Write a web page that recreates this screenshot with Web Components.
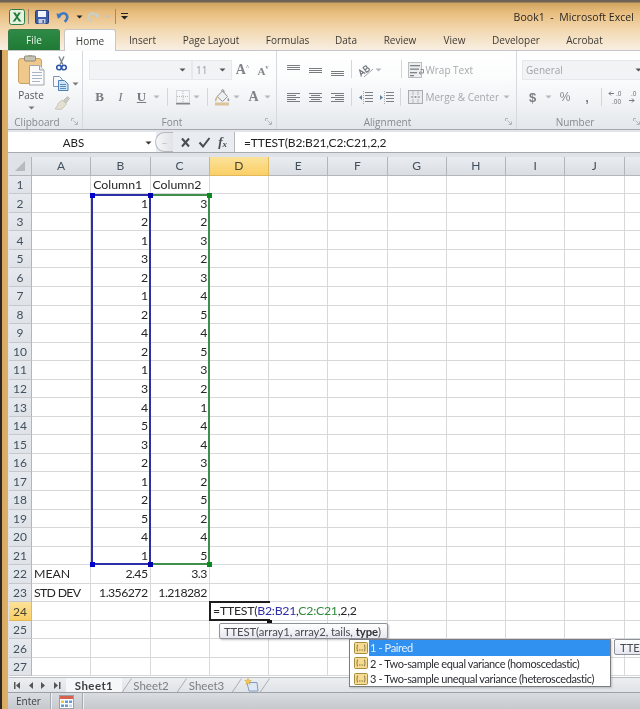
<!DOCTYPE html>
<html><head><meta charset="utf-8">
<style>
html,body{margin:0;padding:0;background:#d9ab62;overflow:hidden}
body{width:640px;height:709px}
</style></head><body>
<xl-app></xl-app>
<script>
const UI='"Open Sans","Noto Sans",sans-serif', CELL='Lato,"Liberation Sans",sans-serif';
const svg=(w,h,b)=>`<svg width="${w}" height="${h}" viewBox="0 0 ${w} ${h}" xmlns="http://www.w3.org/2000/svg">${b}</svg>`;
const ARW=(c='#8d9196')=>svg(7,4,`<path d="M0.5 0.5h6l-3 3z" fill="${c}"/>`);
const ICON={
 excel:svg(16,16,`<rect x=".5" y=".5" width="15" height="15" rx="2" fill="#e6f2dc" stroke="#2f7d4a"/><path d="M4 3.5l3 4.5-3.4 4.6h2.4l2-3 1.9 3h2.6L8.9 8l3-4.5H9.5L8 6.1 6.5 3.5z" fill="#1f7a3d"/>`),
 save:svg(14,14,`<rect x=".5" y=".5" width="13" height="13" rx="1" fill="#3b5ea8" stroke="#2a3f7c"/><rect x="3" y="1" width="8" height="6" fill="#f2f5fb"/><rect x="3.5" y="9" width="7" height="4.5" fill="#c7cfe0"/><rect x="7.5" y="10" width="1.5" height="3" fill="#3b5ea8"/>`),
 undo:svg(13,13,`<path d="M3 7.5C3.5 3.6 8 2 10.2 4.4c2.2 2.4.6 5.6-1.6 7.4" fill="none" stroke="#3f79c4" stroke-width="2.6"/><path d="M.4 3.4l6 .6-4.4 5z" fill="#3f79c4"/>`),
 redo:svg(13,13,`<path d="M10 7.5C9.5 3.6 5 2 2.8 4.4c-2.2 2.4-.6 5.6 1.6 7.4" fill="none" stroke="#c9cfc6" stroke-width="2.4"/><path d="M12.6 3.4l-6 .6 4.4 5z" fill="#c9cfc6"/>`),
 qat:svg(7,7,`<rect x="0" y="0" width="7" height="1" fill="#222"/><path d="M0 3h7l-3.5 3.6z" fill="#222"/>`),
 paste:svg(27,31,`<rect x=".5" y="3.5" width="23" height="25" rx="2.5" fill="#eec98b" stroke="#c99f62"/><rect x="6.5" y="1" width="11" height="5" rx="1" fill="#c9c3b4" stroke="#8f8a7c"/><rect x="10" y="0" width="4" height="2" fill="#a9a496"/><path d="M11.500 10.500h10l4.500 4.500v15h-14.500z" fill="#fbfbfb" stroke="#9fa6ad"/><path d="M21.500 10.500v4.500h4.500" fill="#e8ebee" stroke="#9fa6ad"/><g fill="#a6b6c6"><rect x="14" y="17" width="10" height="1"/><rect x="14" y="20" width="10" height="1"/><rect x="14" y="23" width="10" height="1"/><rect x="14" y="26" width="8" height="1"/></g>`),
 cut:svg(11,15,`<path d="M3 .5l3.800 8M8 .5L4.200 8.500" stroke="#7f8488" stroke-width="1.400" fill="none"/><circle cx="3" cy="11.500" r="2.300" fill="none" stroke="#2e55a8" stroke-width="1.600"/><circle cx="8" cy="11.500" r="2.300" fill="none" stroke="#2e55a8" stroke-width="1.600"/>`),
 copy:svg(16,15,`<path d="M.5.5h6l2.500 2.500v7.500H.5z" fill="#f6f8fb" stroke="#7f97b5"/><path d="M5.500 4.500h6l3.500 3.500v6.500H5.500z" fill="#cfe3f6" stroke="#4b7fb6"/><g fill="#5a8cc0"><rect x="7" y="8" width="6" height="1"/><rect x="7" y="10" width="6" height="1"/><rect x="7" y="12" width="6" height="1"/></g>`),
 brush:svg(16,14,`<path d="M9.500 4.500L13.500.500l2 2-3.500 4.500z" fill="#c9c9c5" stroke="#a7a7a2" stroke-width=".6"/><path d="M8.500 4L12.500 8 8 13c-2.500.8-5.500.4-7-.2 1.500-1 2.800-3.800 3.300-5.800z" fill="#e3dfd2" stroke="#bdb9a9" stroke-width=".7"/>`),
 borders:svg(16,15,`<rect x="1.500" y=".5" width="13" height="12" fill="none" stroke="#b5b9bd" stroke-dasharray="1 1"/><path d="M8 1v12M2 6.500h12" stroke="#b5b9bd" stroke-dasharray="1 1"/><rect x="1" y="13" width="14" height="1.500" fill="#83878b"/>`),
 fill:svg(17,17,`<path d="M3 7.500L8.500 2l5 5.500L8.500 12.500z" fill="#efefef" stroke="#8f9296"/><path d="M8 2.500c-1-3 2.500-2.500 2 1" fill="none" stroke="#7f8387"/><path d="M3 7.500c-1.500 1-2.500 3-2 4.500s2-.5 2-2z" fill="#d5b98b"/><path d="M14 8.500c.8 1.400 1.600 2.300 1.200 3.200-.5.800-1.800.4-1.800-.6z" fill="#8f9296"/><rect x="1" y="13.500" width="14" height="3" fill="#dbc49b"/>`),
 orient:svg(17,15,`<g transform="rotate(-38 8 8)"><path d="M1 9.500l2.500-6 2.500 6M2 7.500h3" fill="none" stroke="#6f7478" stroke-width="1.100"/><path d="M7.800 9.500V3.500h2a1.500 1.500 0 010 3h-2h2.500a1.500 1.500 0 010 3z" fill="none" stroke="#6f7478" stroke-width="1.100"/></g><path d="M6 14L15 6" stroke="#9ea3a8" stroke-width="1"/>`),
 wrap:svg(16,16,`<rect x=".5" y=".5" width="13" height="15" fill="#eceef0" stroke="#babec2"/><g fill="#7e8387"><rect x="2" y="3" width="10" height="1.300"/><rect x="2" y="6.500" width="9" height="1.300"/><rect x="2" y="10" width="7" height="1.300"/><rect x="2" y="13" width="4" height="1.300"/></g><path d="M12.500 7.500h3v3.500h-4M13 9.500l-2 1.500 2 1.500" fill="none" stroke="#8a8f93"/>`),
 merge:svg(15,14,`<rect x=".5" y=".5" width="14" height="13" fill="#e9eaeb" stroke="#a8acb0"/><path d="M5 1v12M10 1v12" stroke="#b6babe"/><rect x="3" y="5.500" width="9" height="3" fill="#fbfbfb"/><path d="M3 7h2.500M12 7H9.500" stroke="#72777b"/><rect x="6.500" y="6" width="2" height="2" fill="#9a9ea2"/>`),
 launcher:svg(7,7,`<path d="M.5 3V.5H3" fill="none" stroke="#b3b7bb"/><path d="M2.500 2.500l3.500 3.500M3.500 6.500h3v-3" fill="none" stroke="#b3b7bb"/>`),
 dec1:svg(18,16,`<path d="M1 4.500h5M3 2.500l-2 2 2 2" fill="none" stroke="#75797d"/><text x="8" y="6.500" font-size="6.500" font-family="Liberation Sans" fill="#6e7276">.0</text><text x="4" y="14.500" font-size="6.500" font-family="Liberation Sans" fill="#6e7276">.00</text>`),
 dec2:svg(12,16,`<path d="M1 11.500h5M4 9.500l2 2-2 2" fill="none" stroke="#75797d"/><text x="3" y="6.500" font-size="6.500" font-family="Liberation Sans" fill="#6e7276">.0</text>`),
 newsheet:svg(16,15,`<path d="M4 4.500h10l1 8.500H6z" fill="#dfe9f5" stroke="#7f9cc0"/><path d="M5 0l1 2.300 2.400.2-1.900 1.600.6 2.400L5 5.200 2.900 6.500l.6-2.400L1.600 2.500 4 2.300z" fill="#f3c64f" stroke="#d69b2d" stroke-width=".4"/>`),
 macro:svg(15,15,`<rect x=".5" y="1.500" width="14" height="13" fill="#fff" stroke="#9aa0a8"/><rect x="1" y="2" width="13" height="3" fill="#d8604e"/><rect x="2" y="6.500" width="3" height="2.500" fill="#f0c34d"/><rect x="6" y="6.500" width="3" height="2.500" fill="#5e9bd8"/><rect x="10" y="6.500" width="3" height="2.500" fill="#5e9bd8"/><rect x="2" y="10.500" width="3" height="2.500" fill="#5e9bd8"/><rect x="6" y="10.500" width="3" height="2.500" fill="#5e9bd8"/><rect x="10" y="10.500" width="3" height="2.500" fill="#c6d8ec"/>`),
 enum:svg(14,12,`<rect x=".5" y=".5" width="13" height="11" rx="1" fill="#f6dc92" stroke="#a98c3c"/><path d="M4 2.500C2.700 2.500 3.700 6 2.600 6 3.700 6 2.700 9.500 4 9.500M10 2.500C11.300 2.500 10.300 6 11.400 6 10.300 6 11.300 9.500 10 9.500" fill="none" stroke="#6b5a28" stroke-width=".8"/><path d="M5.200 8h.8M6.600 8h.8M8 8h.8" stroke="#6b5a28"/>`)
};
const alignIcon=(kind)=>{
 const m={top:[5,7,9],mid:[8,10,12],bot:[11,13,15]}[kind];
 return svg(13,16,m.map(y=>`<rect x="0" y="${y}" width="13" height="1" fill="#777c81"/>`).join(''));
};
const hAlign=(k)=>{
 const a={l:[[0,13],[0,9],[0,13],[0,9],[0,13]],c:[[0,13],[2,11],[0,13],[2,11],[0,13]],r:[[0,13],[4,13],[0,13],[4,13],[0,13]]}[k];
 return svg(13,11,a.map((p,i)=>`<rect x="${p[0]}" y="${i*2+1}" width="${p[1]-p[0]}" height="1" fill="#777c81"/>`).join(''));
};
const indent=(rev)=>svg(15,13,`<g fill="#7a7f84"><rect x="7" y="1" width="8" height="1"/><rect x="7" y="4" width="8" height="1"/><rect x="7" y="7" width="8" height="1"/><rect x="7" y="10" width="8" height="1"/></g><path d="${rev?'M1 4v5l3-2.500z':'M4 4v5L1 6.500z'}" fill="#5f7f9f"/><path d="M5.500 0v13" stroke="#a8acb0" stroke-dasharray="1 1"/>`);

class Base extends HTMLElement{
 constructor(){super();this.attachShadow({mode:'open'}).innerHTML=this.render();}
}
class XlApp extends Base{render(){return `<style>
 :host{display:grid;grid-template-columns:8px 1fr;grid-template-rows:50px 1fr;width:640px;height:709px;overflow:hidden;position:relative;filter:blur(.3px);
   background:linear-gradient(90deg,#2b2722 0,#2b2722 1.500px,#d9ab62 2.500px,#dcae68 8px)}
 .top{grid-column:1/3;display:flex;flex-direction:column}
 .main{grid-column:2;display:flex;flex-direction:column;min-width:0;background:#dfe3e8}
 </style>
 <div class="top"><title-strip></title-strip><ribbon-tabs></ribbon-tabs></div>
 <div class="main"><ribbon-bar></ribbon-bar><formula-bar></formula-bar><sheet-grid></sheet-grid><sheet-tabs></sheet-tabs><status-strip></status-strip></div>`;}}
class TitleStrip extends Base{render(){return `<style>
 :host{display:flex;align-items:center;height:29px;box-sizing:border-box;padding:4px 6px 0 9px;font:10.500px ${UI};color:#222;position:relative;
  background:linear-gradient(180deg,#6d6255 0,#6d6255 2px,#cfa35f 3px,#e8bc7c 12px,#f2d7ae 29px)}
 .c{display:flex;align-items:center;justify-content:center}
 .sep{width:1px;height:15px;background:#8a7f6c;opacity:.8}
 .t{margin-left:auto;white-space:nowrap;letter-spacing:.05px;color:#2a2622}
 </style>
 <span class="c" style="width:16px">${ICON.excel}</span><span class="sep" style="margin:0 6px 0 3px"></span>
 <span class="c" style="width:14px">${ICON.save}</span><span class="c" style="width:22px;margin-left:2px">${ICON.undo}</span><span class="c" style="width:12px">${ARW('#222')}</span>
 <span class="c" style="width:14px;margin-left:1px">${ICON.redo}</span><span class="c" style="width:14px">${ARW('#c3c6bd')}</span>
 <span class="sep" style="margin:0 3px 0 1px"></span><span class="c" style="width:10px">${ICON.qat}</span>
 <span class="t">Book1&nbsp; -&nbsp; Microsoft Excel</span>`;}}
class RibbonTabs extends Base{render(){
 const tabs=[['Insert',129,27],['Page Layout',182,58],['Formulas',266,43],['Data',335,22],['Review',383,34],['View',443,23],['Developer',492,48],['Acrobat',566,37]];
 return `<style>
 :host{display:flex;height:21px;padding-left:8px;align-items:stretch;font:10px ${UI};color:#3d3a35;position:relative;
  background:linear-gradient(180deg,#f2d7ae,#f8efe3);box-sizing:border-box}
 .file{width:52px;border-radius:3px 3px 0 0;background:linear-gradient(180deg,#2f8a48,#1e7a34);color:#eaf5ea;display:flex;align-items:center;justify-content:center;border:1px solid #3a7a48;border-bottom:0;box-sizing:border-box}
 .home{width:52px;margin-left:4px;box-sizing:border-box;border:1px solid #c5c7ca;border-bottom:0;border-radius:3px 3px 0 0;background:linear-gradient(180deg,#fff,#fbfbfc);display:flex;align-items:center;justify-content:center;margin-bottom:-1px;position:relative;z-index:1}
 .tab{display:flex;align-items:center;justify-content:center;white-space:nowrap}
 </style><span class="file">File</span><span class="home">Home</span>
 ${(()=>{let x=116,s='';for(const [n,l,w] of tabs){s+=`<span class="tab" style="margin-left:${l-x}px;width:${w}px">${n}</span>`;x=l+w;}return s;})()}`;}}
class RibbonBar extends Base{render(){
 const it=(w,h,ml=0)=>`<span class="i" style="width:${w}px${ml?`;margin-left:${ml}px`:''}">${h}</span>`;
 const sep=(ml,mr)=>`<span class="vs" style="margin:0 ${mr}px 0 ${ml}px"></span>`;
 const ga=ARW('#b3b6ba');
 return `<style>
 :host{display:flex;height:80px;box-sizing:border-box;font:10px ${UI};color:#8b8f94;overflow:hidden;flex:none;
   background:linear-gradient(180deg,#fff 0,#fbfcfc 35%,#eef0f3 75%,#e3e7eb 100%);border-bottom:1px solid #a6aaaf;border-top:1px solid #c3c5c8}
 .g{position:relative;display:flex;flex-direction:column;box-sizing:border-box;border-right:1px solid #d6d9dd;flex:none}
 .b{flex:1;display:flex;flex-direction:column}
 .l{height:16px;display:flex;align-items:center;justify-content:center;font-size:10px;color:#868a8f;position:relative;box-sizing:border-box;padding-top:2px}
 .l svg{position:absolute;right:4px;top:5px}
 .r{display:flex;align-items:center;height:20px}
 .i{display:flex;align-items:center;justify-content:center;flex:none;height:100%}
 .vs{width:1px;height:18px;background:#d3d6da;flex:none}
 .box{height:20px;background:#f1f3f5;border:1px solid #e6e8eb;box-sizing:border-box;display:flex;align-items:center;color:#9a9ea2;font-size:10px;flex:none}
 .tx{color:#a4a8ac;font-size:10px;white-space:nowrap;display:flex;align-items:center}
 </style>
 <div class="g" style="width:75px"><div class="b" style="flex-direction:row">
   <div style="width:46px;display:flex;flex-direction:column;align-items:center;padding:4px 0 0 0">${ICON.paste}<span style="color:#55595e;font-size:10px;line-height:12px;margin-top:3px">Paste</span><span style="margin-top:5px;display:flex">${ARW('#777')}</span></div>
   <div style="display:flex;flex-direction:column;align-items:flex-start;padding:5px 0 0 0">
     <span style="height:20px;margin-left:2px;display:block">${ICON.cut}</span>
     <span style="height:20px;display:flex;align-items:flex-start;gap:3px;margin-left:-1px">${ICON.copy}<span style="display:flex;margin-top:6px">${ARW('#777')}</span></span>
     <span style="display:block">${ICON.brush}</span>
   </div></div>
   <div class="l" style="padding-right:16px">Clipboard${ICON.launcher}</div></div>
 <div class="g" style="width:194px"><div class="b" style="padding:9px 0 0 6px">
   <div class="r"><span class="box" style="width:103px;justify-content:flex-end;padding-right:5px">${ARW('#555')}</span><span class="box" style="width:40px;justify-content:space-between;padding:0 5px 0 3px">11${ARW('#555')}</span>
     <span class="i" style="width:19px;margin-left:1px;color:#80848a;font:bold 14px 'Liberation Serif';position:relative">A<sup style="font-size:6px;line-height:0;margin-top:-7px">^</sup></span>
     <span class="i" style="width:16px;margin-left:3px;color:#80848a;font:bold 11px 'Liberation Serif';padding-top:2px;box-sizing:border-box">A<sup style="font-size:6px;line-height:0;margin-top:-8px">v</sup></span></div>
   <div class="r" style="margin-top:7px;font:bold 13px 'Liberation Serif';color:#777b80">
     <span class="i" style="width:21px">B</span>
     <span class="i" style="width:21px;font-style:italic;font-weight:400">I</span>
     <span class="i" style="width:21px;text-decoration:underline;font-weight:700">U</span>
     ${it(9,ga)}${sep(5.5,5)}${it(20,ICON.borders)}${it(8,ga)}${sep(6.5,4.5)}${it(20,ICON.fill)}${it(8,ga)}
     <span class="i" style="width:22px;margin-left:2px;color:#7e8287;font-size:14px">A</span>${it(8,ga,-1)}
   </div></div>
   <div class="l" style="margin-top:auto;padding-right:15px">Font${ICON.launcher}</div></div>
 <div class="g" style="width:240px"><div class="b" style="padding:9px 0 0 6.500px">
   <div class="r" style="align-items:flex-start">
     <span class="i" style="width:20.500px;height:16px">${alignIcon('top')}</span><span class="i" style="width:22px;height:16px">${alignIcon('mid')}</span><span class="i" style="width:22px;height:16px">${alignIcon('bot')}</span>
     ${sep(2.5,6)}
     ${it(17,ICON.orient)}${it(8,ga)}${sep(18,6.5)}
     ${it(16,ICON.wrap)}<span class="tx" style="margin-left:1.500px;height:100%">Wrap Text</span></div>
   <div class="r" style="margin-top:7px">
     <span class="i" style="width:20.500px">${hAlign('l')}</span><span class="i" style="width:22px">${hAlign('c')}</span><span class="i" style="width:22px">${hAlign('r')}</span>
     ${sep(2.5,5)}${it(17,indent(0))}${it(4.7,'')}${it(17,indent(1))}${sep(5.3,6.5)}
     ${it(15,ICON.merge)}<span class="tx" style="margin-left:2.500px">Merge &amp; Center</span>${it(14,ga)}</div></div>
   <div class="l" style="margin-top:auto;padding-right:18px">Alignment${ICON.launcher}</div></div>
 <div class="g" style="flex:1;border-right:0;min-width:0"><div class="b" style="padding:9px 0 0 5px">
   <div class="r"><span class="box" style="width:118px;padding-left:3px;justify-content:flex-start;gap:72px;color:#a0a4a8;border-right:0">General<span style="display:flex">${ARW('#555')}</span></span></div>
   <div class="r" style="margin-top:7px">
     <span class="i" style="width:21px;font:bold 13px 'Liberation Sans';color:#7b7f84">$</span>${it(10,ga)}
     <span class="i" style="width:22px;font:12px 'Liberation Sans';color:#85898e;margin-left:1px">%</span>
     <span class="i" style="width:22px;font:bold 13px 'Liberation Sans';color:#7b7f84">,</span>
     ${sep(3,6)}${it(18,ICON.dec1)}${it(2,'')}${it(12,ICON.dec2)}</div></div>
   <div class="l" style="margin-top:auto;padding-right:7px;width:123px">Number<span style="position:absolute;right:-4px;top:0;display:block;width:0">${ICON.launcher}</span></div></div>`;}}
class FormulaBar extends Base{render(){return `<style>
 :host{display:flex;height:23px;flex:none;box-sizing:border-box;padding-top:2px;background:#e1e4e8;border-bottom:1px solid #a7abb0;font:12px ${CELL};color:#222;align-items:stretch}
 .name{width:148px;background:#fff;display:flex;align-items:center;box-sizing:border-box;position:relative;justify-content:center;padding-right:17px;font:11.500px ${CELL}}
 .name svg{position:absolute;right:4px;top:9px}
 .mid{width:78px;background:#e9ecf0;display:flex;align-items:center;position:relative;font-family:"Liberation Serif"}
 .bump{width:18px;height:100%;border-radius:50% 0 0 50%;background:linear-gradient(90deg,#f5f6f7,#e0e3e7);border:1px solid #b5b9be;border-right:0;box-sizing:border-box;margin-left:-1px;color:#9aa1a8;display:flex;align-items:center;justify-content:center;font-size:9px}
 .f{flex:1;background:#fff;display:flex;align-items:center;padding-left:9px;border-left:1px solid #b5b9be;white-space:nowrap;letter-spacing:-.15px}
 .m{display:flex;align-items:center;justify-content:center;flex:none}
 </style><span class="name">ABS${ARW('#333')}</span>
 <span class="mid"><span class="bump">–</span>
  <span class="m" style="width:15px;margin-left:4.500px">${svg(11,11,'<path d="M2 1.500l7 8M9 1.500l-7 8" stroke="#4a4d50" stroke-width="2"/>')}</span>
  <span class="m" style="width:18px;margin-left:2.500px">${svg(13,11,'<path d="M1.500 5.500l3.500 4L11.500 1" fill="none" stroke="#4a4d50" stroke-width="2"/>')}</span>
  <span class="m" style="width:16px;margin-left:1.700px;font:italic bold 13px 'Liberation Serif';color:#4a4d50">f<span style="font-size:9px;margin-top:3px">x</span></span>
 </span><span class="f">=TTEST(B2:B21,C2:C21,2,2</span>`;}}
class SheetGrid extends Base{render(){
 const C=['A','B','C','D','E','F','G','H','I','J','K'];
 const B=[1,2,1,3,2,1,2,4,2,1,3,4,5,3,2,1,2,5,4,1], Cc=[3,2,3,2,3,4,5,4,5,3,2,1,4,4,3,2,5,2,4,5];
 const v={};
 v['B1']=['Column1','l'];v['C1']=['Column2','l'];
 B.forEach((n,i)=>v['B'+(i+2)]=[n,'r']);Cc.forEach((n,i)=>v['C'+(i+2)]=[n,'r']);
 v['A22']=['MEAN','l'];v['A23']=['STD DEV','l t'];v['B22']=['2.45','r'];v['C22']=['3.3','r'];v['B23']=['1.356272','r'];v['C23']=['1.218282','r'];
 let h=`<span class="corner"><svg width="12" height="12"><path d="M11 1v10H1z" fill="#b6bbc1"/></svg></span>`;
 C.forEach(c=>h+=`<span class="ch${c==='D'?' on':''}">${c==='K'?'':c}</span>`);
 for(let r=1;r<=27;r++){h+=`<span class="rh${r===24?' on':''}">${r}</span>`;
  C.forEach(c=>{const x=v[c+r];h+=`<span class="c ${x?x[1]:''}">${x?x[0]:''}</span>`;});}
 const sq=(l,t,c)=>`<i class="sq" style="left:${l}px;top:${t}px;background:${c}"></i>`;
 return `<style>
 :host{display:block;height:520px;position:relative;z-index:2;flex:none;background:#fff;margin-top:4px;font:12.300px ${CELL};color:#262626;margin-left:1px}
 .g{display:grid;grid-template-columns:23px repeat(11,59.250px);grid-template-rows:18.700px repeat(27,18.556px);height:520px;overflow:hidden;width:631px}
 span{box-sizing:border-box;display:flex;align-items:center;white-space:nowrap;min-width:0}
 .c{border-right:1px solid #d7d8da;border-bottom:1px solid #d7d8da;padding:0 2px;overflow:visible}
 .r{justify-content:flex-end;letter-spacing:-.55px}.l{justify-content:flex-start}.t{letter-spacing:-.7px}
 .ch{background:linear-gradient(180deg,#e9ecf0,#dadee3);border-right:1px solid #b2b6bb;border-bottom:1px solid #b2b6bb;justify-content:center;color:#42505e;font-size:12px}
 .rh{background:linear-gradient(180deg,#e6e9ed,#dfe2e7);border-right:1px solid #b2b6bb;border-bottom:1px solid #c5c9cd;justify-content:center;color:#42505e;font-size:12px}
 .corner{background:#dfe3e7;border-right:1px solid #b2b6bb;border-bottom:1px solid #b2b6bb;justify-content:center}
 .on{background:linear-gradient(180deg,#fbe29a,#fbcf66);border-color:#e2b85c;color:#4a4330}
 .rng{position:absolute;box-sizing:border-box;pointer-events:none}
 .sq{position:absolute;width:5px;height:5px}
 .edit{position:absolute;left:200px;top:444px;width:61px;height:20px;box-sizing:border-box;border:2px solid #1d1d1d;border-right:0;background:#fff;display:block;line-height:16px;padding-left:2px;overflow:visible;font-size:12.300px;white-space:nowrap;letter-spacing:-.25px}
 .fh{position:absolute;left:258px;top:463px;width:5px;height:4px;background:#111}
 .edit em{font-style:normal}
 .tip{position:absolute;left:210px;top:466px;height:16px;width:169px;padding:0 0 0 4px;border:1px solid #8e9197;border-radius:2px;background:linear-gradient(180deg,#fff,#e6e7f0);box-shadow:1px 1px 2px rgba(0,0,0,.25);font:11.300px ${CELL};color:#4a4c50;letter-spacing:-.12px}
 .tip b{color:#333;margin-left:3px}
 .tip2{position:absolute;left:605px;top:482px;height:16px;width:40px;padding-left:5px;border:1px solid #8e9197;border-radius:2px;background:linear-gradient(180deg,#fff,#e6e7f0);font:11.300px ${CELL};color:#4a4c50}
 .menu{position:absolute;left:340px;top:482px;width:262px;height:48px;box-sizing:border-box;background:#fff;border:1px solid #7a7c80;display:flex;flex-direction:column;font:11px ${CELL};color:#2a2c30;box-shadow:1px 1px 2px rgba(0,0,0,.2);letter-spacing:-.37px}
 .it{height:15.500px;flex:none;padding-left:4px}
 .it .tx{height:100%;margin-left:1px;padding-left:1px;flex:1}
 .it svg{flex:none}
 .it.sel .tx{background:#3091f0;color:#e6f1ff}
 </style>
 <div class="g">${h}</div>
 <div class="rng" style="left:82px;top:37px;width:60px;height:371px;border:2px solid #2b2fa8"></div>
 <div class="rng" style="left:142px;top:37px;width:59px;height:371px;border:2px solid #3f8f4c;border-left:0"></div>
 ${sq(80.5,35.5,'#0000d0')}${sq(197.5,35.5,'#0a8a1e')}${sq(80.5,404.5,'#0000d0')}${sq(197.5,404.5,'#0a8a1e')}${sq(138.5,35.5,'#0000b0')}${sq(138.5,404.5,'#0000b0')}
 <div class="edit">=TTEST(<em style="color:#2f2fa8">B2:B21</em>,<em style="color:#2f8a3c">C2:C21</em>,2,2</div><div class="fh"></div>
 <span class="tip">TTEST(array1, array2, tails, <b>type</b>)</span>
 <span class="tip2">TTE</span>
 <div class="menu">
  <span class="it sel">${ICON.enum}<span class="tx">1 - Paired</span></span>
  <span class="it">${ICON.enum}<span class="tx">2 - Two-sample equal variance (homoscedastic)</span></span>
  <span class="it">${ICON.enum}<span class="tx">3 - Two-sample unequal variance (heteroscedastic)</span></span>
 </div>`;}}
class SheetTabs extends Base{render(){
 const nav=(d)=>svg(8,9,d);
 const sl=()=>svg(10,15,'<path d="M0 14.500L9.500 .5" stroke="#a9adb2"/>').replace('<svg','<svg class="s"');
 return `<style>
 :host{display:flex;height:15px;flex:none;margin-left:1px;align-items:center;background:linear-gradient(180deg,#eceef1,#e0e3e7);border-top:1px solid #b9bdc2;box-sizing:border-box;font:11.500px ${CELL};color:#7b7f83;position:relative;z-index:0}
 .n{width:14px;display:flex;align-items:center;justify-content:center;flex:none}
 .t{display:flex;align-items:center;justify-content:center;height:100%;flex:none;box-sizing:border-box;white-space:nowrap}
 .a{background:#f6f7f9;color:#3d4044;font-weight:700;width:56px;letter-spacing:.4px}
 svg.s{flex:none;display:block}
 </style>
 <span class="n" style="margin-left:1px">${nav('<rect x="1" y="1" width="1.500" height="7" fill="#555"/><path d="M7 1v7L3 4.500z" fill="#555"/>')}</span>
 <span class="n">${nav('<path d="M6 1v7L2 4.500z" fill="#555"/>')}</span>
 <span class="n" style="margin-left:-2px">${nav('<path d="M2 1v7l4-3.500z" fill="#555"/>')}</span>
 <span class="n" style="margin-right:2px">${nav('<rect x="6" y="1" width="1.500" height="7" fill="#555"/><path d="M1 1v7l4-3.500z" fill="#555"/>')}</span>
 <span class="t a">Sheet1</span>${sl()}
 <span class="t" style="width:45px;padding-right:7px">Sheet2</span>${sl()}
 <span class="t" style="width:45px;padding-right:6px">Sheet3</span>${sl()}
 <span class="n" style="width:18px">${ICON.newsheet}</span>${sl()}`;}}
class StatusStrip extends Base{render(){return `<style>
 :host{display:flex;height:17px;flex:none;align-items:center;background:linear-gradient(180deg,#d9dce0,#c5c8cc);border-top:1px solid #9ea2a6;box-sizing:border-box;font:10px ${UI};color:#3f4245}
 .sep{width:1px;height:100%;background:#eef0f2;border-left:1px solid #a6aaae;flex:none}
 </style><span style="margin-left:8px;width:34px">Enter</span><span class="sep"></span>
 <span style="margin-left:7px;width:16px;display:flex">${ICON.macro}</span><span class="sep" style="margin-left:7px"></span>`;}}
[['xl-app',XlApp],['title-strip',TitleStrip],['ribbon-tabs',RibbonTabs],['ribbon-bar',RibbonBar],['formula-bar',FormulaBar],['sheet-grid',SheetGrid],['sheet-tabs',SheetTabs],['status-strip',StatusStrip]].forEach(([n,c])=>customElements.define(n,c));
</script>
</body></html>
